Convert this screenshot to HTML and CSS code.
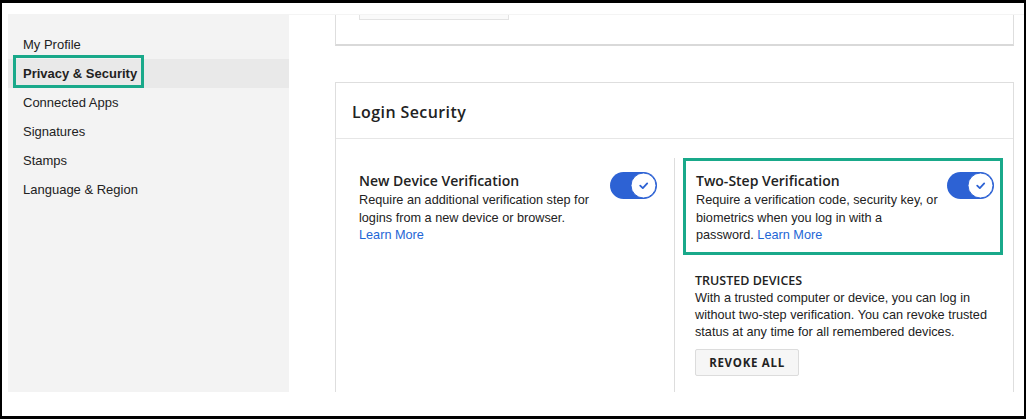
FILE: index.html
```html
<!DOCTYPE html>
<html lang="en">
<head>
    <meta charset="UTF-8">
    <title>Privacy &amp; Security</title>
    <link rel="stylesheet" href="styles.css">
</head>
<body>
    <div class="frame">

        <!-- Settings navigation -->
        <aside class="sidebar">
            <ul class="nav">
                <li>My Profile</li>
                <li class="active">Privacy &amp; Security</li>
                <li>Connected Apps</li>
                <li>Signatures</li>
                <li>Stamps</li>
                <li>Language &amp; Region</li>
            </ul>
        </aside>

        <main class="content">
            <!-- previous card, scrolled mostly out of view -->
            <section class="card card-prev">
                <div class="prev-btn"></div>
            </section>

            <section class="card">
                <h2 class="card-title">Login Security</h2>
                <div class="card-body">
                    <div class="col col-left">
                        <div class="setting">
                            <div class="setting-text">
                                <h3>New Device Verification</h3>
                                <p>Require an additional verification step for logins from a new device or browser. <a href="#">Learn More</a></p>
                            </div>
                            <span class="toggle">
                                <svg width="47" height="27" viewBox="0 0 47 27">
                                    <rect x="0" y="0" width="47" height="27" rx="13.5" fill="#2d62d4"/>
                                    <circle cx="33.5" cy="13.5" r="12.5" fill="#fff" stroke="#2d62d4" stroke-width="1"/>
                                    <path d="M30.2 13.6 L32.8 16.1 L37.2 11.4" fill="none" stroke="#2d62d4" stroke-width="1.8" stroke-linecap="round" stroke-linejoin="round"/>
                                </svg>
                            </span>
                        </div>
                    </div>
                    <div class="col col-right">
                        <div class="setting highlight">
                            <div class="setting-text">
                                <h3>Two-Step Verification</h3>
                                <p>Require a verification code, security key, or biometrics when you log in with a password. <a href="#">Learn More</a></p>
                            </div>
                            <span class="toggle">
                                <svg width="47" height="27" viewBox="0 0 47 27">
                                    <rect x="0" y="0" width="47" height="27" rx="13.5" fill="#2d62d4"/>
                                    <circle cx="33.5" cy="13.5" r="12.5" fill="#fff" stroke="#2d62d4" stroke-width="1"/>
                                    <path d="M30.2 13.6 L32.8 16.1 L37.2 11.4" fill="none" stroke="#2d62d4" stroke-width="1.8" stroke-linecap="round" stroke-linejoin="round"/>
                                </svg>
                            </span>
                        </div>

                        <div class="trusted">
                            <h4>Trusted Devices</h4>
                            <p>With a trusted computer or device, you can log in without two-step verification. You can revoke trusted status at any time for all remembered devices.</p>
                            <button class="revoke-btn">Revoke All</button>
                        </div>
                    </div>
                </div>
            </section>
        </main>

    </div>
</body>
</html>
```

FILE: styles.css
```css
body {
    margin: 0;
    background-color: #fff;
    font-family: "Liberation Sans", Arial, sans-serif;
    color: #222;
}
.frame {
    width: 1026px;
    height: 419px;
    box-sizing: border-box;
    border-style: solid;
    border-color: #000;
    border-width: 3px 2px 3px 2px;
    padding: 11px 0 0 6px;
    display: flex;
    align-items: flex-start;
}

/* sidebar */
.sidebar {
    flex-shrink: 0;
    width: 281px;
    height: 378px;
    box-sizing: border-box;
    padding-top: 16px;
    background-color: #f3f3f3;
}
.nav {
    list-style-type: none;
    margin: 0;
    padding: 0;
}
.nav li {
    height: 29px;
    line-height: 29px;
    padding-left: 15px;
    font-size: 13px;
    color: #222;
}
.nav li.active {
    position: relative;
    background-color: #e9e9e9;
    font-weight: bold;
}
.nav li.active::after {
    content: "";
    position: absolute;
    left: 5px;
    top: -4px;
    width: 131px;
    height: 33px;
    box-sizing: border-box;
    border: 3px solid #19a98a;
}

/* main column */
.content {
    flex-shrink: 0;
    width: 735px;
    height: 378px;
    box-sizing: border-box;
    overflow: hidden;
    padding: 0 10px 0 46px;
    border-top: 1px solid #f4f4f4;
}
.card {
    border: 1px solid #dedede;
    background-color: #fff;
}
.card-prev {
    height: 29px;
    border-top: none;
    border-bottom: 2px solid #d9d9d9;
}
.prev-btn {
    margin-left: 23px;
    width: 148px;
    height: 4px;
    border: 1px solid #e3e3e3;
    border-top: none;
    background-color: #fafafa;
}
.card-prev + .card {
    margin-top: 36px;
    border-bottom: none;
}
.card-title {
    margin: 0;
    height: 51px;
    padding: 4px 16px 0;
    line-height: 51px;
    border-bottom: 1px solid #e6e6e6;
    font-family: "Open Sans", sans-serif;
    font-weight: 600;
    font-size: 16px;
    letter-spacing: 0.4px;
    color: #222;
}
.card-body {
    display: flex;
    padding: 19px 0 0 10px;
    height: 300px;
}
.col-left {
    padding-right: 8px;
}
.col-right {
    border-left: 1px solid #dddddd;
    padding-left: 8px;
}

/* setting rows */
.setting {
    width: 320px;
    box-sizing: border-box;
    border: 3px solid transparent;
    padding: 9px 6px 7px 10px;
    display: flex;
    justify-content: space-between;
    align-items: flex-start;
}
.setting.highlight {
    border-color: #19a98a;
}
.setting h3 {
    margin: 0;
    font-family: "Open Sans", sans-serif;
    font-weight: 600;
    font-size: 14px;
    line-height: 22px;
    color: #222;
}
.setting p {
    margin: 0;
    width: 243px;
    font-size: 12.7px;
    line-height: 17.5px;
}
.setting a,
.trusted a {
    color: #1e66d6;
    text-decoration: none;
    white-space: nowrap;
}
.toggle {
    display: block;
    margin-top: 2px;
    height: 27px;
}

/* trusted devices */
.trusted {
    padding-left: 12px;
    margin-top: 17px;
}
.trusted h4 {
    margin: 0;
    font-family: "Open Sans", sans-serif;
    font-weight: 600;
    font-size: 12.5px;
    line-height: 18px;
    text-transform: uppercase;
    color: #222;
}
.trusted p {
    margin: 0;
    width: 300px;
    font-size: 12.7px;
    line-height: 17px;
}
.revoke-btn {
    margin-top: 8px;
    height: 27px;
    width: 104px;
    padding: 0;
    background-color: #f6f6f6;
    border: 1px solid #dcdcdc;
    border-radius: 2px;
    font-family: "Open Sans", sans-serif;
    font-weight: 700;
    font-size: 11.5px;
    letter-spacing: 0.7px;
    text-transform: uppercase;
    color: #222;
}
```
